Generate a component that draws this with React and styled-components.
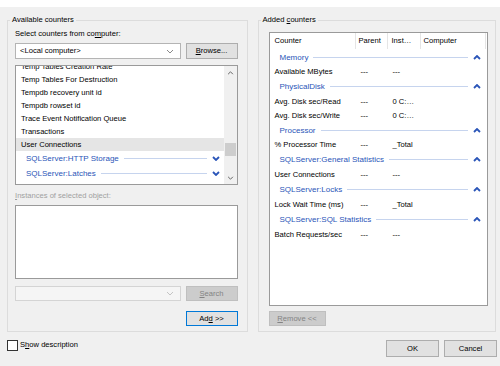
import React from "react";
import styled, { createGlobalStyle } from "styled-components";

const GlobalStyle = createGlobalStyle`
  html, body { margin: 0; padding: 0; background: #fff; }
  body {
    font-family: "Liberation Sans", "Segoe UI", Arial, sans-serif;
    font-size: 7.6px;
    color: #000;
  }
  * { box-sizing: border-box; }
`;

const BLUE = "#2a55b8";

const Screen = styled.div`
  width: 500px;
  height: 366px;
  padding-top: 7px;
  background: #fff;
  overflow: hidden;
`;

const Window = styled.div`
  height: 359px;
  background: #f0f0f0;
  padding: 6px 4px 0 7px;
  display: flex;
  flex-direction: column;
`;

const Columns = styled.div`
  display: flex;
  gap: 10px;
`;

const Group = styled.fieldset`
  margin: 0;
  min-width: 0;
  width: ${(p) => p.$w}px;
  border: 1px solid #dcdcdc;
  padding: 0 ${(p) => p.$pr}px 5px ${(p) => p.$pl}px;
  display: flex;
  flex-direction: column;
`;

const Legend = styled.legend`
  padding: 0 2px;
  margin-left: ${(p) => p.$ml}px;
  line-height: 14px;
`;

const Label = styled.div`
  line-height: 14px;
  margin-top: ${(p) => p.$mt || 0}px;
  color: ${(p) => (p.$disabled ? "#a0a0a0" : "#000")};
  white-space: nowrap;
`;

const Row = styled.div`
  display: flex;
  gap: 5px;
  margin-top: ${(p) => p.$mt || 0}px;
  justify-content: ${(p) => p.$justify || "flex-start"};
`;

const Combo = styled.div`
  flex: 1;
  height: ${(p) => p.$h}px;
  border: 1px solid ${(p) => (p.$disabled ? "#d4d4d4" : "#b4b4b4")};
  background: ${(p) => (p.$disabled ? "#f5f5f5" : "#fff")};
  display: flex;
  align-items: center;
  justify-content: space-between;
  padding: 0 6px 0 4px;
  line-height: 14px;
`;

const Button = styled.div`
  flex: none;
  width: ${(p) => p.$w}px;
  height: ${(p) => p.$h}px;
  display: flex;
  align-items: center;
  justify-content: center;
  line-height: 14px;
  background: ${(p) => (p.$disabled ? "#cccccc" : "#e1e1e1")};
  border: 1px solid
    ${(p) => (p.$default ? "#0078d7" : p.$disabled ? "#bfbfbf" : "#adadad")};
  box-shadow: ${(p) => (p.$default ? "inset 0 0 0 1px #e1e1e1" : "none")};
  color: ${(p) => (p.$disabled ? "#838383" : "#000")};
`;

const ListBox = styled.div`
  height: ${(p) => p.$h}px;
  margin-top: ${(p) => p.$mt || 0}px;
  border: 1px solid #9a9a9a;
  background: #fff;
  display: flex;
  flex-direction: ${(p) => p.$dir || "row"};
  overflow: hidden;
`;

const Items = styled.div`
  flex: 1;
  min-width: 0;
  overflow: hidden;
`;

const Item = styled.div`
  height: 13px;
  line-height: 13px;
  padding-left: 5px;
  white-space: nowrap;
  background: ${(p) => (p.$selected ? "#e5e5e5" : "transparent")};
  &:first-child {
    margin-top: -6px;
  }
`;

const GroupHead = styled.div`
  height: ${(p) => p.$h}px;
  display: flex;
  align-items: center;
  padding: 0 ${(p) => p.$pr}px 0 ${(p) => p.$pl}px;
  color: ${BLUE};
  font-size: 8px;
  white-space: nowrap;
`;

const Rule = styled.div`
  flex: 1;
  height: 1px;
  background: #c6d4ee;
  margin: 0 5px 0 5px;
`;

const ScrollBar = styled.div`
  width: 13px;
  flex: none;
  background: #f0f0f0;
  display: flex;
  flex-direction: column;
`;

const ScrollArrow = styled.div`
  height: 13px;
  display: flex;
  align-items: center;
  justify-content: center;
`;

const Thumb = styled.div`
  height: 13px;
  margin: ${(p) => p.$top}px 1px 0 1px;
  background: #cdcdcd;
`;

const Track = styled.div`
  flex: 1;
`;

const Header = styled.div`
  display: grid;
  grid-template-columns: 86px 32px 33px 65px;
  height: 16px;
  line-height: 16px;
`;

const HeadCell = styled.div`
  padding-left: ${(p) => p.$pl}px;
  border-right: 1px solid #e5e5e5;
  white-space: nowrap;
  overflow: hidden;
`;

const DataRow = styled.div`
  display: grid;
  grid-template-columns: 86px 32px 33px 65px;
  height: 13.5px;
  line-height: 13.5px;
  white-space: nowrap;
`;

const Cell = styled.div`
  padding-left: 5px;
  overflow: visible;
`;

const Footer = styled.div`
  display: flex;
  align-items: flex-start;
  justify-content: space-between;
  margin-top: 8px;
`;

const CheckLabel = styled.label`
  display: flex;
  align-items: center;
  gap: 2px;
  margin-top: -2px;
  line-height: 14px;
`;

const Box = styled.span`
  width: 11px;
  height: 11px;
  border: 1px solid #333;
  background: #fff;
`;

const Buttons = styled.div`
  display: flex;
  gap: 5px;
  margin-right: -1px;
`;

const Chevron = ({ up, color = BLUE, w = 8, h = 5, stroke = 1.8 }) => (
  <svg width={w} height={h} viewBox="0 0 8 5">
    <path
      d={up ? "M1 4 L4 1 L7 4" : "M1 1 L4 4 L7 1"}
      fill="none"
      stroke={color}
      strokeWidth={stroke}
    />
  </svg>
);

const counters = [
  "Temp Tables Creation Rate",
  "Temp Tables For Destruction",
  "Tempdb recovery unit id",
  "Tempdb rowset id",
  "Trace Event Notification Queue",
  "Transactions",
  "User Connections",
];

const added = [
  { group: "Memory", rows: [["Available MBytes", "---", "---"]] },
  {
    group: "PhysicalDisk",
    rows: [
      ["Avg. Disk sec/Read", "---", "0 C:…"],
      ["Avg. Disk sec/Write", "---", "0 C:…"],
    ],
  },
  { group: "Processor", rows: [["% Processor Time", "---", "_Total"]] },
  {
    group: "SQLServer:General Statistics",
    rows: [["User Connections", "---", "---"]],
  },
  { group: "SQLServer:Locks", rows: [["Lock Wait Time (ms)", "---", "_Total"]] },
  {
    group: "SQLServer:SQL Statistics",
    rows: [["Batch Requests/sec", "---", "---"]],
  },
];

export default function App() {
  return (
    <Screen>
      <GlobalStyle />
      <Window>
        <Columns>
          <Group $w={241} $pl={7} $pr={9}>
            <Legend $ml={-5}>Available counters</Legend>
            <Label>
              Select counters from co<u>m</u>puter:
            </Label>
            <Row $mt={2}>
              <Combo $h={16}>
                <span>&lt;Local computer&gt;</span>
                <Chevron color="#8a8a8a" stroke={1} />
              </Combo>
              <Button $w={52} $h={16}>
                <span>
                  <u>B</u>rowse...
                </span>
              </Button>
            </Row>
            <ListBox $h={120} $mt={6}>
              <Items>
                {counters.map((c) => (
                  <Item key={c} $selected={c === "User Connections"}>
                    {c}
                  </Item>
                ))}
                <GroupHead $h={15} $pl={10} $pr={4}>
                  SQLServer:HTTP Storage
                  <Rule />
                  <Chevron />
                </GroupHead>
                <GroupHead $h={15} $pl={10} $pr={4}>
                  SQLServer:Latches
                  <Rule />
                  <Chevron />
                </GroupHead>
              </Items>
              <ScrollBar>
                <ScrollArrow>
                  <Chevron up color="#606060" w={7} h={4} stroke={1.2} />
                </ScrollArrow>
                <Thumb $top={64} />
                <Track />
                <ScrollArrow>
                  <Chevron color="#606060" w={7} h={4} stroke={1.2} />
                </ScrollArrow>
              </ScrollBar>
            </ListBox>
            <Label $mt={4} $disabled>
              <u>I</u>nstances of selected object:
            </Label>
            <ListBox $h={74} $mt={2} />
            <Row $mt={7}>
              <Combo $h={15} $disabled>
                <span />
                <Chevron color="#c4c4c4" stroke={1} />
              </Combo>
              <Button $w={52} $h={15} $disabled>
                <span>
                  <u>S</u>earch
                </span>
              </Button>
            </Row>
            <Row $mt={10} $justify="flex-end">
              <Button $w={52} $h={15} $default>
                <span>
                  Ad<u>d</u> &gt;&gt;
                </span>
              </Button>
            </Row>
          </Group>

          <Group $w={239} $pl={10} $pr={7}>
            <Legend $ml={-8}>
              Added <u>c</u>ounters
            </Legend>
            <ListBox $h={274} $mt={5} $dir="column">
              <Header>
                <HeadCell $pl={5}>Counter</HeadCell>
                <HeadCell $pl={3}>Parent</HeadCell>
                <HeadCell $pl={4}>Inst…</HeadCell>
                <HeadCell $pl={3}>Computer</HeadCell>
              </Header>
              {added.map((g) => (
                <React.Fragment key={g.group}>
                  <GroupHead $h={16.25} $pl={10} $pr={6}>
                    {g.group}
                    <Rule />
                    <Chevron up />
                  </GroupHead>
                  {g.rows.map((r) => (
                    <DataRow key={r[0]}>
                      <Cell>{r[0]}</Cell>
                      <Cell>{r[1]}</Cell>
                      <Cell>{r[2]}</Cell>
                      <Cell />
                    </DataRow>
                  ))}
                </React.Fragment>
              ))}
            </ListBox>
            <Row $mt={5}>
              <Button $w={57} $h={15} $disabled>
                <span>
                  <u>R</u>emove &lt;&lt;
                </span>
              </Button>
            </Row>
          </Group>
        </Columns>

        <Footer>
          <CheckLabel>
            <Box />
            <span>
              S<u>h</u>ow description
            </span>
          </CheckLabel>
          <Buttons>
            <Button $w={53} $h={17}>
              OK
            </Button>
            <Button $w={53} $h={17}>
              Cancel
            </Button>
          </Buttons>
        </Footer>
      </Window>
    </Screen>
  );
}
